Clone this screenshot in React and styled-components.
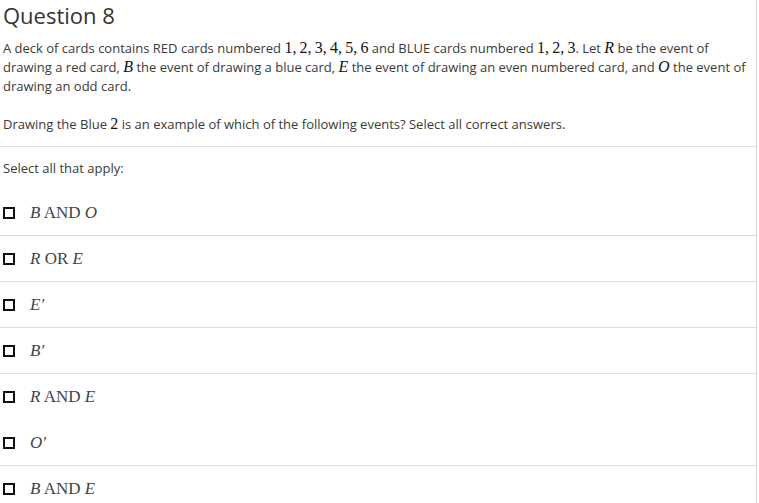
import React from 'react';
import styled, { createGlobalStyle } from 'styled-components';

const GlobalStyle = createGlobalStyle`
  body {
    margin: 0;
    background: #fff;
    font-family: "Open Sans", "Liberation Sans", sans-serif;
    color: #333;
  }
`;

const Page = styled.div`
  width: 756px;
  min-height: 503px;
  border-right: 1px solid #d4d4d4;
`;

const Header = styled.div`
  padding: 2px 8px 12px 3px;
  border-bottom: 1px solid #ddd;
`;

const Title = styled.h2`
  margin: 0 0 11px;
  font-size: 22px;
  font-weight: 400;
  line-height: 26px;
  color: #333;
`;

const Para = styled.p`
  margin: 0 0 19px;
  font-size: 13px;
  line-height: 19px;
  color: #3a3a3a;

  &:last-child {
    margin-bottom: 0;
  }
`;

const M = styled.span`
  font-family: "Liberation Serif", "DejaVu Serif", serif;
  font-size: 16px;
  line-height: 1;
  font-style: ${p => (p.$i ? 'italic' : 'normal')};
  color: #111;
`;

const Prompt = styled.div`
  padding: 12px 3px;
  font-size: 13px;
  line-height: 19px;
  color: #3a3a3a;
`;

const Option = styled.label`
  display: flex;
  align-items: center;
  gap: 15px;
  padding: 12px 3px;
  height: 21px;
  border-bottom: 1px solid ${p => (p.$last ? 'transparent' : '#ddd')};
`;

const Box = styled.span`
  width: 8px;
  height: 8px;
  border: 2px solid #111;
  flex: none;
`;

const Answer = styled.span`
  font-family: "Liberation Serif", "DejaVu Serif", serif;
  font-size: 17px;
  line-height: 21px;
  color: #444;

  i {
    font-style: italic;
  }
`;

const options = [
  [<i>B</i>, ' AND ', <i>O</i>],
  [<i>R</i>, ' OR ', <i>E</i>],
  [<i>E′</i>],
  [<i>B′</i>],
  [<i>R</i>, ' AND ', <i>E</i>],
  [<i>O′</i>],
  [<i>B</i>, ' AND ', <i>E</i>],
];

const list = nums => nums.join(',\u2009');

export default function App() {
  return (
    <Page>
      <GlobalStyle />
      <Header>
        <Title>Question 8</Title>
        <Para>
          A deck of cards contains RED cards numbered <M>{list([1, 2, 3, 4, 5, 6])}</M> and BLUE
          cards numbered <M>{list([1, 2, 3])}</M>. Let <M $i>R</M> be the event of drawing a red
          card, <M $i>B</M> the event of drawing a blue card, <M $i>E</M> the event of drawing an
          even numbered card, and <M $i>O</M> the event of drawing an odd card.
        </Para>
        <Para>
          Drawing the Blue <M>2</M> is an example of which of the following events? Select all
          correct answers.
        </Para>
      </Header>
      <Prompt>Select all that apply:</Prompt>
      {options.map((parts, i) => (
        <Option key={i} $last={i === 4 || i === options.length - 1}>
          <Box />
          <Answer>
            {parts.map((p, j) => (
              <React.Fragment key={j}>{p}</React.Fragment>
            ))}
          </Answer>
        </Option>
      ))}
    </Page>
  );
}
